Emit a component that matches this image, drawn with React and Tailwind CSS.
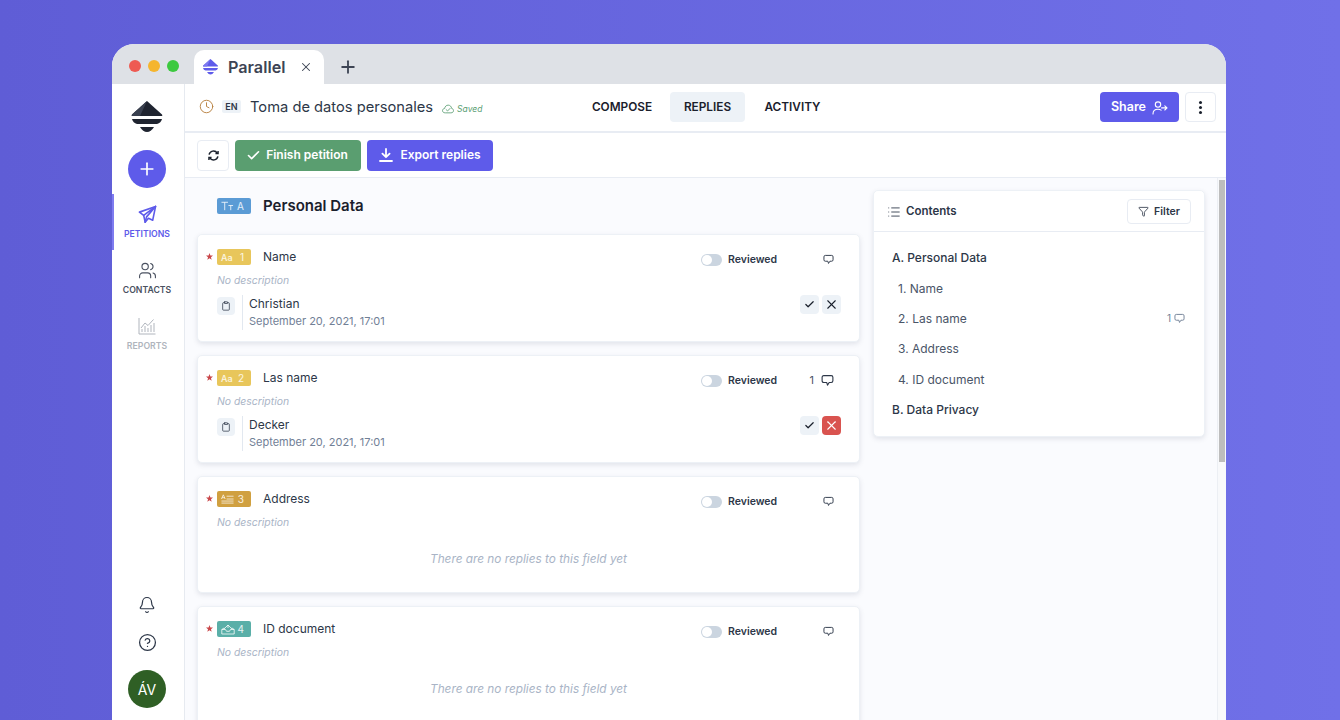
import React from "react";
import { Check, X, Users, Bell, CircleHelp, Plus, Filter, List, Clock, Clipboard } from "lucide-react";

const Logo = ({ className, top = "#1f2430", mid = "#3a4150" }) => (
  <svg viewBox="0 0 32 32" className={className}>
    <path d="M16 0 L31 13.5 Q32 15 30 15 L2 15 Q0 15 1 13.5 Z" fill={top} />
    <path d="M16 0 L9 15 L2 15 Q0 15 1 13.5 Z" fill={mid} />
    <path d="M1 18 H31 Q30 22 26 23 H6 Q2 22 1 18 Z" fill={top} />
    <path d="M9 26 H23 Q20 31 16 31 Q12 31 9 26 Z" fill={top} />
  </svg>
);

const Bubble = ({ className }) => (
  <svg viewBox="0 0 14 14" fill="none" stroke="currentColor" strokeWidth="1.2" strokeLinejoin="round" className={className}>
    <path d="M3 1.8 H11 Q12.8 1.8 12.8 3.6 V7.4 Q12.8 9.2 11 9.2 H8.8 L7 12 L6.2 9.2 H3 Q1.2 9.2 1.2 7.4 V3.6 Q1.2 1.8 3 1.8 Z" />
  </svg>
);

const Refresh = ({ className }) => (
  <svg viewBox="0 0 16 16" fill="none" stroke="currentColor" strokeWidth="1.8" className={className}>
    <path d="M2.6 7 A5.5 5.5 0 0 1 12.6 5" />
    <path d="M13.4 9 A5.5 5.5 0 0 1 3.4 11" />
    <path d="M13.6 2.4 V5.6 H10.4" />
    <path d="M2.4 13.6 V10.4 H5.6" />
  </svg>
);

const Reports = ({ className }) => (
  <svg viewBox="0 0 18 18" fill="none" stroke="currentColor" strokeWidth="1" className={className}>
    <path d="M1 1 V17 H17.5" />
    <path d="M3 11 L7 6 L10 8.5 L15.5 2.5" />
    <path d="M4 15 V12 M7 15 V9 M10 15 V11 M13 15 V8 M16 15 V6" />
  </svg>
);

const Plane = ({ className }) => (
  <svg viewBox="0 0 20 20" fill="none" stroke="currentColor" strokeWidth="1.7" strokeLinejoin="round" strokeLinecap="round" className={className}>
    <path d="M18.5 1.5 L1.5 7.5 L6 11 L7.5 18 L11 14 L15.5 16 Z" />
    <path d="M18.5 1.5 L6 11 M18.5 1.5 L9 12.5 L7.5 18" />
  </svg>
);

const Cloud = ({ className }) => (
  <svg viewBox="0 0 14 11" fill="none" stroke="currentColor" strokeWidth="1" strokeLinecap="round" strokeLinejoin="round" className={className}>
    <path d="M3.5 10 C1.8 10 0.6 8.9 0.6 7.4 C0.6 6 1.7 5 3 4.9 C3.4 2.6 5.1 1 7.2 1 C9.4 1 11 2.6 11.2 4.8 C12.5 5 13.4 6 13.4 7.4 C13.4 8.9 12.3 10 10.8 10 Z" />
    <path d="M4.8 6.2 L6.5 7.8 L9.4 4.8" />
  </svg>
);

const DownloadBar = ({ className }) => (
  <svg viewBox="0 0 14 14" fill="none" stroke="currentColor" strokeWidth="1.8" strokeLinecap="round" strokeLinejoin="round" className={className}>
    <path d="M7 1 V9 M3.4 5.6 L7 9.2 L10.6 5.6 M1 13 H13" />
  </svg>
);

const ShareIcon = ({ className }) => (
  <svg viewBox="0 0 16 14" fill="none" stroke="currentColor" strokeWidth="1.1" strokeLinecap="round" strokeLinejoin="round" className={className}>
    <circle cx="6" cy="3.6" r="2.7" />
    <path d="M1 13 C1 9.8 3 8.3 6 8.3 C7.3 8.3 8.3 8.6 9.1 9.1" />
    <path d="M9.6 6.9 H15 M12.8 4.8 L15 6.9 L12.8 9" />
  </svg>
);

const Star = () => (
  <svg viewBox="0 0 10 10" className="h-[7px] w-[7px] fill-[#c9474a]">
    <path d="M5 0 L6.3 3.4 L10 3.6 L7.1 5.9 L8.1 9.5 L5 7.5 L1.9 9.5 L2.9 5.9 L0 3.6 L3.7 3.4 Z" />
  </svg>
);

const TitleIcon = () => (
  <svg viewBox="0 0 14 10" fill="none" stroke="currentColor" strokeWidth="1" className="h-[10px] w-[13px]">
    <path d="M0.5 1 H7.5 M4 1 V9.5 M8 4.5 H13 M10.5 4.5 V9.5" />
  </svg>
);
const TextIcon = () => <span className="text-[9px] font-medium leading-none">Aa</span>;
const LinesIcon = () => (
  <svg viewBox="0 0 14 10" fill="none" stroke="currentColor" strokeWidth="0.9" className="h-[10px] w-[13px]">
    <path d="M0.5 5 L2.5 0.5 L4.5 5 M1.2 3.6 H3.8 M6 2 H13.5 M6 5 H13.5 M0.5 7.2 H13.5 M0.5 9.4 H13.5" />
  </svg>
);
const FileIcon = () => (
  <svg viewBox="0 0 14 10" fill="none" stroke="currentColor" strokeWidth="0.9" strokeLinejoin="round" className="h-[11px] w-[14px]">
    <path d="M7 0.5 L11 4.5 M7 0.5 L3 4.5 M7 0.5 V3.5 M0.8 5 L3.2 3.4 M13.2 5 L10.8 3.4 M0.8 5 V9.5 H13.2 V5 M0.8 5 H4.5 L5.5 6.8 H8.5 L9.5 5 H13.2" />
  </svg>
);

const Badge = ({ color, icon, label }) => (
  <div className={`flex h-[16px] w-[34px] shrink-0 items-center justify-between rounded-[2px] pl-[4px] pr-[7px] text-[10px] leading-none text-white/85 ${color}`}>
    {icon}
    <span>{label}</span>
  </div>
);

const Header = ({ color, icon, n, title, count }) => (
  <div className="flex h-[16px] items-center">
    <span className="flex w-[19px] justify-start pb-[2px] pl-[8px]"><Star /></span>
    <Badge color={color} icon={icon} label={n} />
    <span className="ml-[12px] text-[12px] text-[#2d3748]">{title}</span>
    <div className="ml-auto flex items-center pr-[25px] pt-[5px]">
      <span className="relative h-[12px] w-[21px] rounded-full bg-[#cbd5e0]">
        <span className="absolute left-[1px] top-[1px] h-[10px] w-[10px] rounded-full bg-white"></span>
      </span>
      <span className="ml-[6px] w-[49px] text-[10.5px] font-semibold text-[#2d3748]">Reviewed</span>
      <div className="flex w-[57px] items-center justify-end gap-[6px] text-[#2d3748]">
        {count ? <span className="mr-[1px] text-[11px] text-[#4a5568]">{count}</span> : null}
        <Bubble className={count ? "h-[13px] w-[13px]" : "h-[11px] w-[11px]"} />
      </div>
    </div>
  </div>
);

const Reply = ({ text, danger }) => (
  <div className="mt-[6px] flex pl-[19px] pr-[18px]">
    <div className="mt-[2px] flex h-[18px] w-[18px] items-center justify-center rounded-[4px] bg-[#edf2f7] text-[#2d3748]">
      <Clipboard className="h-[10px] w-[10px]" strokeWidth={1.8} />
    </div>
    <div className="ml-[7px] h-[35px] border-l border-[#e2e8f0] pl-[6px]">
      <div className="text-[12px] leading-[18px] text-[#2d3748]">{text}</div>
      <div className="text-[11px] leading-[16px] text-[#718096]">September 20, 2021, 17:01</div>
    </div>
    <div className="ml-auto flex gap-[3px]">
      <span className="flex h-[19px] w-[19px] items-center justify-center rounded-[4px] bg-[#edf2f7] text-[#1a202c]">
        <Check className="h-[11px] w-[11px]" strokeWidth={2.6} />
      </span>
      <span className={`flex h-[19px] w-[19px] items-center justify-center rounded-[4px] ${danger ? "bg-[#d9534f] text-white" : "bg-[#edf2f7] text-[#1a202c]"}`}>
        <X className="h-[15px] w-[15px]" strokeWidth={1.7} />
      </span>
    </div>
  </div>
);

const Card = ({ color, icon, n, title, count, reply, danger, className }) => (
  <div className={`rounded-[5px] border border-[#edf1f6] bg-white pt-[14px] shadow-[0_2px_5px_rgba(60,70,100,0.13)] ${className}`}>
    <Header color={color} icon={icon} n={n} title={title} count={count} />
    <div className="mt-[8px] pl-[19px] text-[10.4px] italic leading-[16px] text-[#a9b4c6]">No description</div>
    {reply ? (
      <Reply text={reply} danger={danger} />
    ) : (
      <div className="mt-[20px] text-center text-[11.8px] italic leading-[16px] text-[#a9b4c6]">There are no replies to this field yet</div>
    )}
  </div>
);

const NavItem = ({ icon, label, className, labelClass }) => (
  <div className={`flex h-[56px] flex-col items-center justify-center ${className}`}>
    {icon}
    <span className={`text-[8.7px] font-semibold leading-[12px] ${labelClass}`}>{label}</span>
  </div>
);

const ToC = ({ children, head, right }) => (
  <div className={`flex h-[30.4px] items-center justify-between ${head ? "pl-[18px] font-medium text-[#2d3748]" : "pl-[24px] text-[#4a5568]"} pr-[19px] text-[12px]`}>
    <span>{children}</span>
    {right}
  </div>
);

export default function App() {
  return (
    <div className="h-[720px] w-[1340px] overflow-hidden bg-gradient-to-r from-[#5f5dd6] to-[#7070e8] pl-[112px] pt-[44px] font-['Inter',sans-serif]">
      <div className="flex h-[676px] w-[1114px] flex-col overflow-hidden rounded-t-[22px] bg-white">
        <div className="flex h-[40px] shrink-0 items-end bg-[#dee1e6] pl-[17px]">
          <div className="mb-[12px] flex gap-[7px]">
            <span className="h-[12px] w-[12px] rounded-full bg-[#ee5a52]"></span>
            <span className="h-[12px] w-[12px] rounded-full bg-[#f5b52e]"></span>
            <span className="h-[12px] w-[12px] rounded-full bg-[#3cc93f]"></span>
          </div>
          <div className="ml-[15px] flex h-[34px] w-[130px] items-center rounded-t-[10px] bg-white pl-[8px]">
            <Logo className="h-[16px] w-[17px]" top="#5e5bea" mid="#7c79f0" />
            <span className="ml-[9px] pt-[1px] text-[16.2px] font-semibold text-[#3d4454]">Parallel</span>
            <X className="ml-auto mr-[11px] h-[14px] w-[14px] text-[#3d4454]" strokeWidth={1.8} />
          </div>
          <Plus className="mb-[7px] ml-[14px] h-[20px] w-[20px] text-[#3d4454]" strokeWidth={2.2} />
        </div>

        <div className="flex min-h-0 flex-1">
          <aside className="flex w-[73px] shrink-0 flex-col border-r border-[#e6eaf0] pb-[12px] pr-[2px]">
            <div className="flex justify-center pt-[17px]">
              <Logo className="h-[32px] w-[32px]" />
            </div>
            <div className="mx-auto mt-[17px] flex h-[38px] w-[38px] items-center justify-center rounded-full bg-[#5e5bea] text-white">
              <Plus className="h-[20px] w-[20px]" strokeWidth={2} />
            </div>
            <NavItem
              className="mt-[6px] border-l-2 border-[#7f7cf0] pr-[2px] text-[#5e5bea]"
              icon={<Plane className="h-[19px] w-[19px]" />}
              label="PETITIONS"
              labelClass="mt-[4px]"
            />
            <NavItem
              className="pt-[1px] text-[#4a5160]"
              icon={<Users className="h-[19px] w-[19px]" strokeWidth={1.4} />}
              label="CONTACTS"
              labelClass="mt-[4px]"
            />
            <NavItem
              className="pt-[1px] text-[#b0b5bd]"
              icon={<Reports className="h-[18px] w-[18px]" />}
              label="REPORTS"
              labelClass="mt-[5px]"
            />
            <div className="mt-auto flex flex-col items-center">
              <Bell className="h-[18px] w-[18px] text-[#2d3748]" strokeWidth={1.6} />
              <CircleHelp className="mt-[19px] h-[19px] w-[19px] text-[#2d3748]" strokeWidth={1.6} />
              <div className="mt-[18px] flex h-[38px] w-[38px] items-center justify-center rounded-full bg-[#2f5f25] text-[14px] text-white">ÁV</div>
            </div>
          </aside>

          <div className="flex min-w-0 flex-1 flex-col">
            <div className="flex h-[49px] shrink-0 items-center border-b-2 border-[#e8ecf3] pb-[1px] pl-[14px] pr-[10px]">
              <div className="flex w-[382px] items-center">
                <Clock className="h-[15px] w-[15px] text-[#b8803f]" strokeWidth={1.5} />
                <span className="ml-[8px] flex h-[13px] w-[19px] items-center justify-center rounded-[2px] bg-[#edf2f7] text-[9px] font-semibold text-[#2d3748]">EN</span>
                <span className="ml-[9px] pt-[1px] text-[14.7px] text-[#2d3748]">Toma de datos personales</span>
                <Cloud className="ml-[9px] mt-[4px] h-[10px] w-[12px] text-[#5a9e73]" />
                <span className="ml-[3px] mt-[4px] text-[8.5px] italic text-[#5a9e73]">Saved</span>
              </div>
              <div className="flex items-center text-[11.8px] font-semibold text-[#1a202c]">
                <span className="w-[82px] pt-[2px] text-center">COMPOSE</span>
                <span className="ml-[7px] flex h-[30px] w-[75px] items-center justify-center rounded-[4px] bg-[#edf2f7] pt-[2px]">REPLIES</span>
                <span className="ml-[7px] w-[81px] pt-[2px] text-center">ACTIVITY</span>
              </div>
              <div className="ml-auto flex h-[30px] w-[79px] items-center justify-center gap-[6px] rounded-[4px] bg-[#5e5bea] pt-[1px] text-[12.5px] font-semibold text-white">
                Share
                <ShareIcon className="h-[14px] w-[16px]" />
              </div>
              <div className="ml-[6px] flex h-[30px] w-[31px] items-center justify-center rounded-[4px] border border-[#e8ecf3]">
                <span className="flex flex-col gap-[2px]">
                  <span className="h-[3px] w-[3px] rounded-full bg-[#1a202c]"></span>
                  <span className="h-[3px] w-[3px] rounded-full bg-[#1a202c]"></span>
                  <span className="h-[3px] w-[3px] rounded-full bg-[#1a202c]"></span>
                </span>
              </div>
            </div>

            <div className="flex h-[45px] shrink-0 items-center gap-[6px] border-b border-[#e8ecf3] pl-[12px]">
              <span className="flex h-[31px] w-[32px] items-center justify-center rounded-[4px] border border-[#e8ecf3] text-[#1a202c]">
                <Refresh className="h-[13px] w-[13px]" />
              </span>
              <span className="flex h-[31px] w-[126px] items-center justify-center gap-[5px] rounded-[4px] bg-[#5a9e70] pr-[2px] text-[12px] font-semibold text-white">
                <Check className="h-[15px] w-[15px]" strokeWidth={2.6} />
                Finish petition
              </span>
              <span className="flex h-[31px] w-[126px] items-center justify-center gap-[7px] rounded-[4px] bg-[#5e5bea] text-[12px] font-semibold text-white">
                <DownloadBar className="h-[14px] w-[14px]" />
                Export replies
              </span>
            </div>

            <div className="flex min-h-0 flex-1 bg-[#fafbfe]">
              <div className="w-[688px] shrink-0 overflow-hidden pl-[12px]">
                <div className="w-[663px]">
                  <div className="flex h-[56px] items-center pl-[20px]">
                    <div className="flex h-[16px] w-[34px] items-center justify-between rounded-[2px] bg-[#5b9bd5] pl-[4px] pr-[7px] text-[10px] leading-none text-white/85">
                      <TitleIcon />
                      <span>A</span>
                    </div>
                    <span className="ml-[12px] text-[15px] font-semibold text-[#1a202c]">Personal Data</span>
                  </div>
                  <div className="flex flex-col gap-[13px]">
                    <Card className="h-[108px]" color="bg-[#e8c65b]" icon={<TextIcon />} n="1" title="Name" reply="Christian" />
                    <Card className="h-[108px]" color="bg-[#e8c65b]" icon={<TextIcon />} n="2" title="Las name" count="1" reply="Decker" danger />
                    <Card className="h-[117px]" color="bg-[#d0a040]" icon={<LinesIcon />} n="3" title="Address" />
                    <Card className="h-[130px]" color="bg-[#5aafa8]" icon={<FileIcon />} n="4" title="ID document" />
                  </div>
                </div>
              </div>

              <div className="w-[344px] shrink-0 pt-[12px]">
                <div className="w-[332px] rounded-[5px] border border-[#edf1f6] bg-white pb-[11px] shadow-[0_2px_5px_rgba(60,70,100,0.13)]">
                  <div className="flex h-[41px] items-center border-b border-[#e8ecf3] pl-[13px] pr-[13px] pt-[1px]">
                    <List className="h-[14px] w-[14px] text-[#2d3748]" strokeWidth={1.5} />
                    <span className="ml-[5px] text-[11.5px] font-semibold text-[#2d3748]">Contents</span>
                    <span className="ml-auto flex h-[25px] w-[64px] items-center justify-center gap-[5px] rounded-[4px] border border-[#e8ecf3] text-[10.5px] font-semibold text-[#2d3748]">
                      <Filter className="h-[11px] w-[11px]" strokeWidth={1.8} />
                      Filter
                    </span>
                  </div>
                  <div className="pt-[11px]">
                    <ToC head>A. Personal Data</ToC>
                    <ToC>1. Name</ToC>
                    <ToC right={<span className="flex items-center gap-[3px] text-[10px] text-[#718096]">1<Bubble className="h-[11px] w-[11px]" /></span>}>2. Las name</ToC>
                    <ToC>3. Address</ToC>
                    <ToC>4. ID document</ToC>
                    <ToC head>B. Data Privacy</ToC>
                  </div>
                </div>
              </div>

              <div className="w-[9px] shrink-0 border-l border-[#eceff4] bg-[#f8f9fb]">
                <div className="ml-[1px] mt-[2px] h-[282px] w-[6px] bg-[#bdbdbd]"></div>
              </div>
            </div>
          </div>
        </div>
      </div>
    </div>
  );
}
